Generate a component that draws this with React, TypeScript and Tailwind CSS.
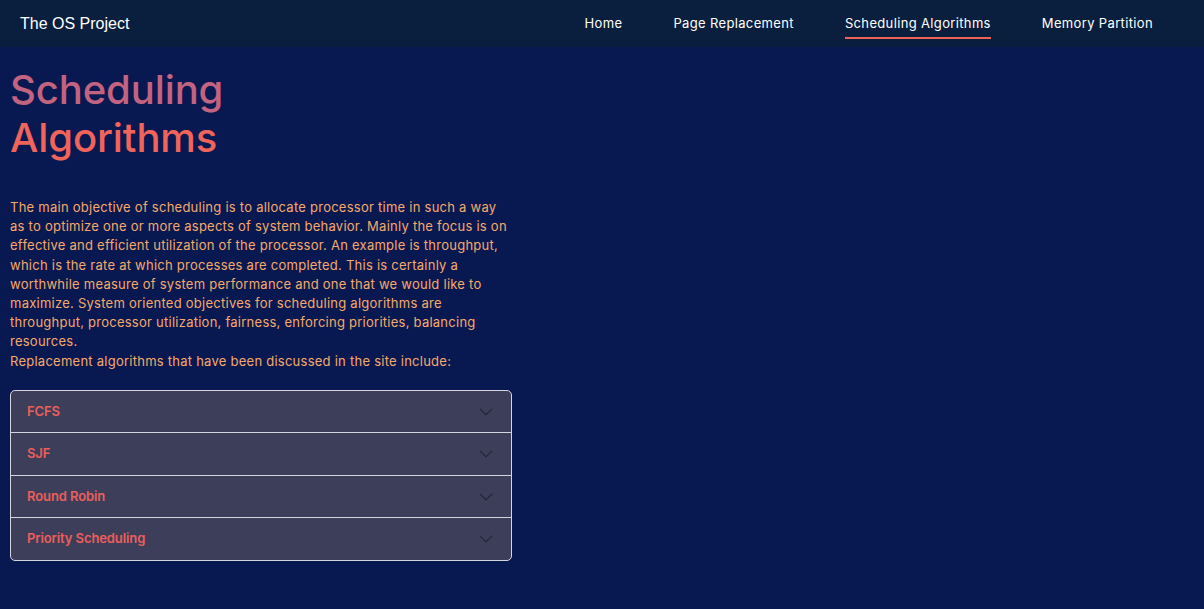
import { useState } from 'react';

const navLinks = ['Home', 'Page Replacement', 'Scheduling Algorithms', 'Memory Partition'];

const algorithms = ['FCFS', 'SJF', 'Round Robin', 'Priority Scheduling'];

const paragraphLines = [
  'The main objective of scheduling is to allocate processor time in such a way',
  'as to optimize one or more aspects of system behavior. Mainly the focus is on',
  'effective and efficient utilization of the processor. An example is throughput,',
  'which is the rate at which processes are completed. This is certainly a',
  'worthwhile measure of system performance and one that we would like to',
  'maximize. System oriented objectives for scheduling algorithms are',
  'throughput, processor utilization, fairness, enforcing priorities, balancing',
  'resources.',
  'Replacement algorithms that have been discussed in the site include:',
];

function Chevron() {
  return (
    <svg width="14" height="8" viewBox="0 0 14 8" fill="none" className="text-[#26283a]">
      <path d="M0.8 0.8 L7 6.8 L13.2 0.8" stroke="currentColor" strokeWidth="1.2" />
    </svg>
  );
}

export default function App() {
  const [open, setOpen] = useState<string | null>(null);

  return (
    <div className="min-h-[609px] bg-[#081952] font-['Inter',sans-serif]">
      {/* Navbar */}
      <header className="h-[47px] bg-[#0a1f3e] flex items-center justify-between pl-[20px] pr-[51px]">
        <span className="font-['Liberation_Sans',Arial,sans-serif] text-[16px] text-white">The OS Project</span>
        <nav className="flex items-center gap-[51px] h-full">
          {navLinks.map((link) => (
            <a
              key={link}
              className={`relative h-full flex items-center text-[13px] text-white tracking-[0.35px] ${
                link === 'Scheduling Algorithms' ? 'after:absolute after:left-0 after:right-0 after:top-[37px] after:h-[2px] after:bg-[#ef6257]' : ''
              }`}
            >
              {link}
            </a>
          ))}
        </nav>
      </header>

      <main className="pl-[10px] pt-[19px]">
        <h1 className="text-[40px] leading-[48px] font-medium tracking-[-0.1px]">
          <span className="block text-[#c4637f]">Scheduling</span>
          <span className="block text-[#f0645a]">Algorithms</span>
        </h1>

        <p className="mt-[36px] text-[13px] leading-[19.2px] text-[#f6a96a] tracking-[0.25px]">
          {paragraphLines.map((line) => (
            <span key={line} className="block">{line}</span>
          ))}
        </p>

        <div className="mt-[19px] w-[502px] rounded-[5px] border border-[#d4d5de] bg-[#3c3e5a] overflow-hidden">
          {algorithms.map((algo, i) => (
            <div key={algo} className={i > 0 ? 'border-t border-[#d4d5de]' : ''}>
              <button
                onClick={() => setOpen(open === algo ? null : algo)}
                className="w-full h-[41.5px] flex items-center justify-between pl-[16px] pr-[18px] text-left"
              >
                <span className="text-[13px] font-semibold text-[#ec5f5a] tracking-[-0.1px]">{algo}</span>
                <Chevron />
              </button>
            </div>
          ))}
        </div>
      </main>
    </div>
  );
}
